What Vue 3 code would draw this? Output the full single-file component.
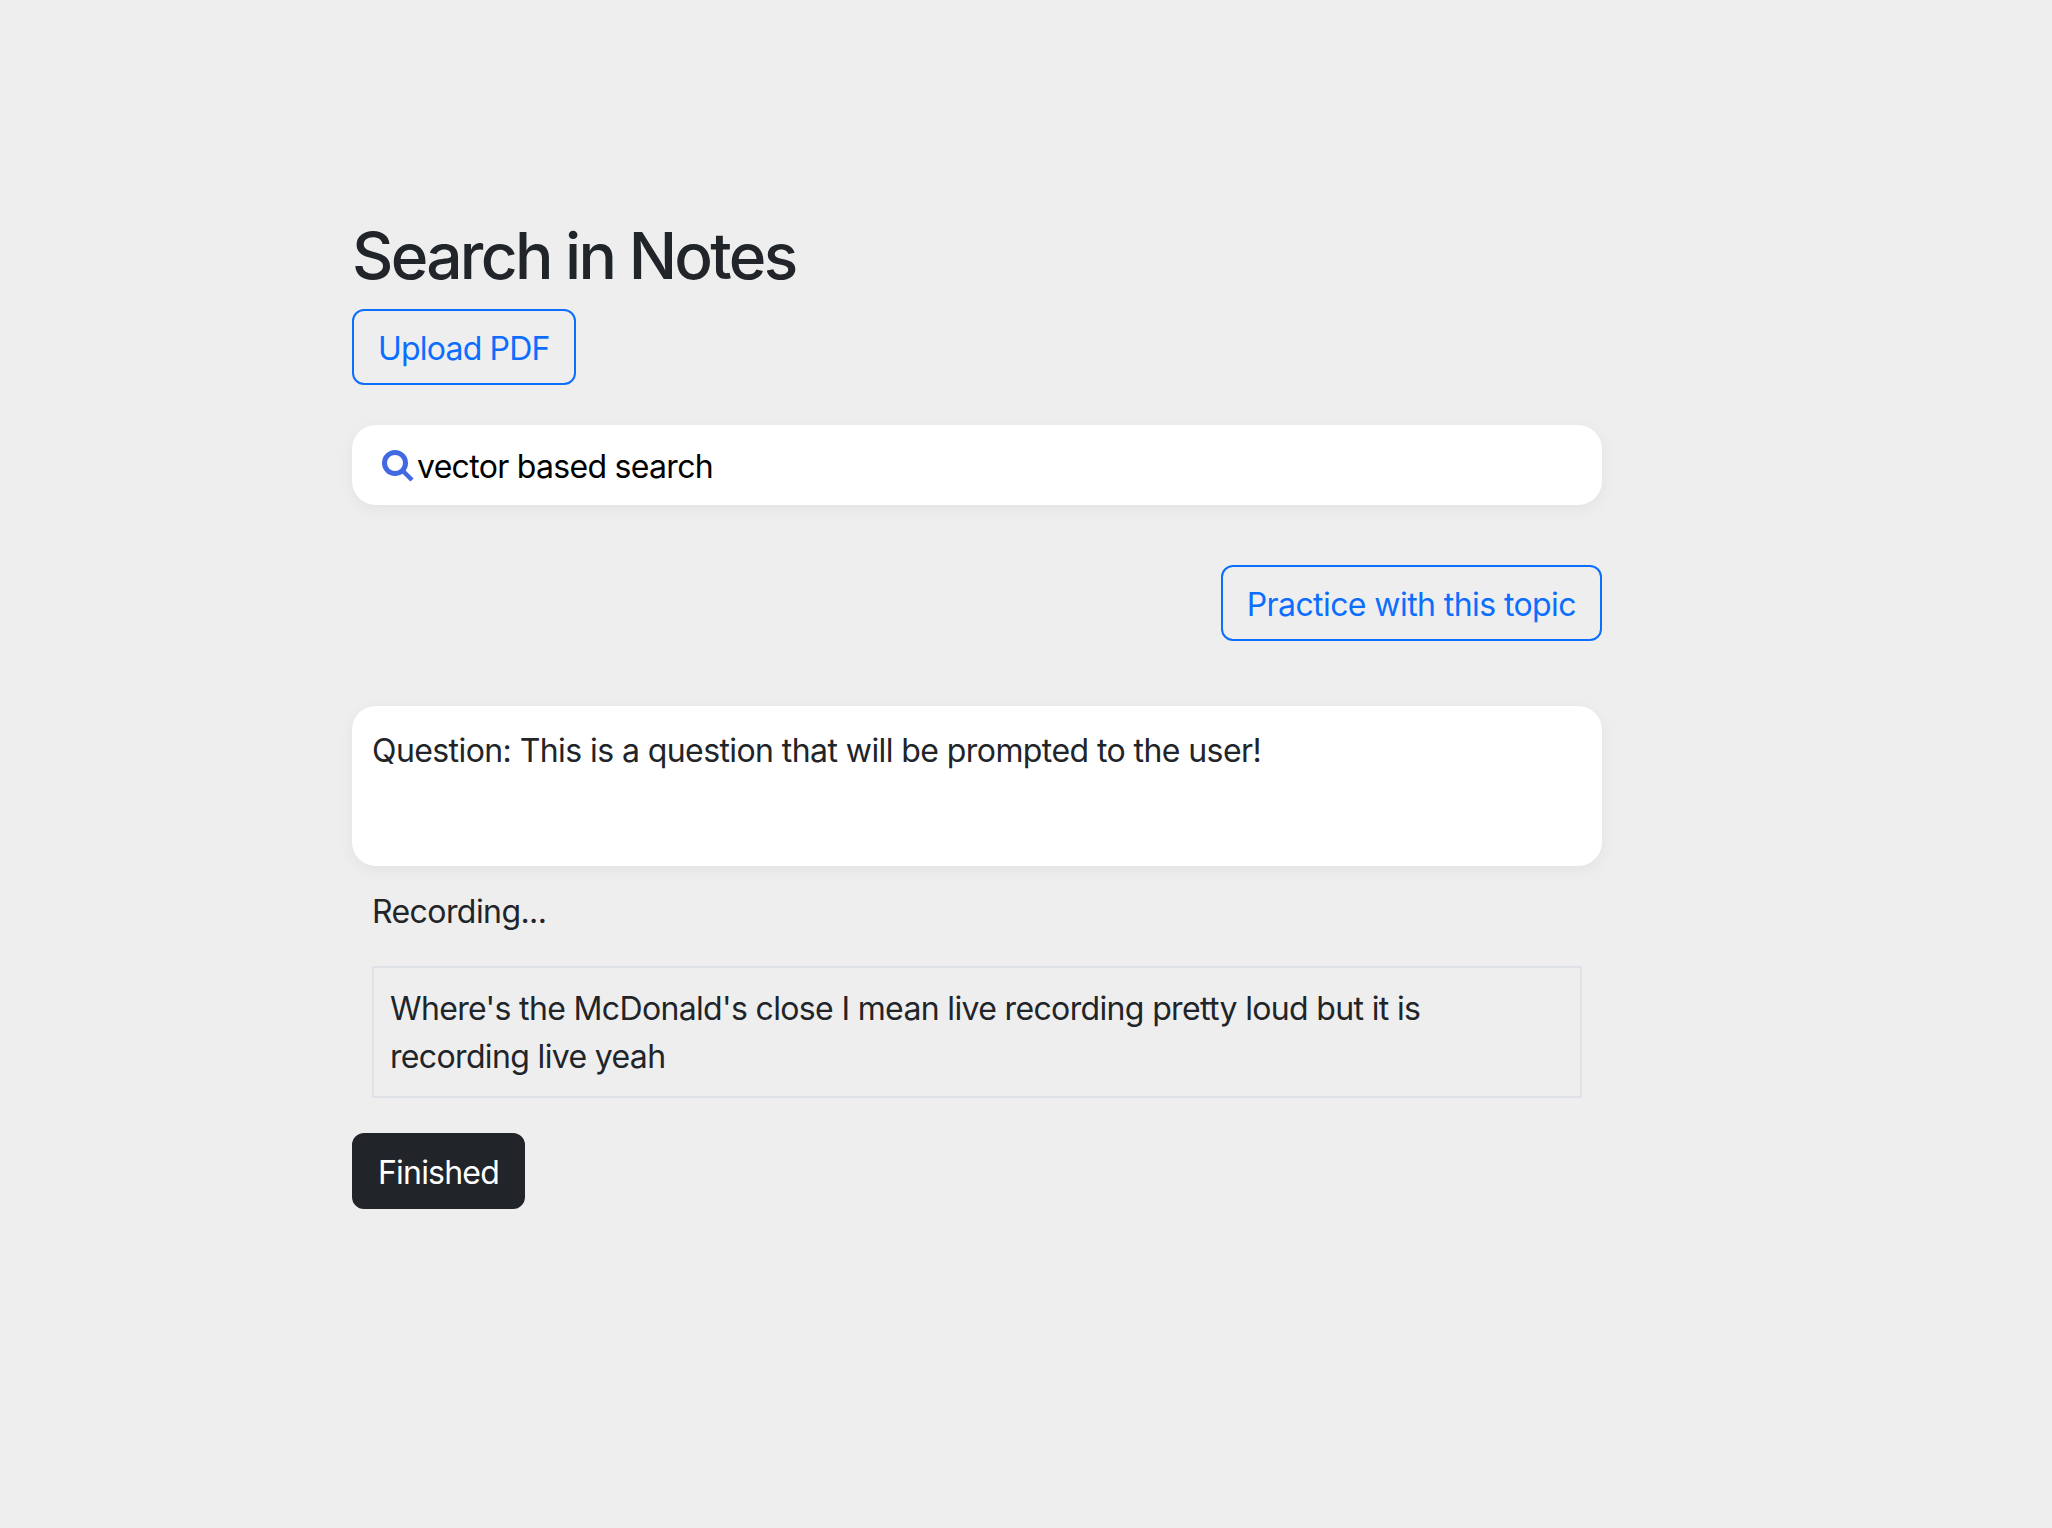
<template>
  <div class="page">
    <h2 class="title">Search in Notes</h2>
    <button class="btn btn_outline btn_short">Upload PDF</button>

    <div class="search_bar">
      <svg class="search_icon" viewBox="0 0 32 32" width="32" height="32">
        <circle cx="13" cy="13" r="10.5" fill="none" stroke="#4169e1" stroke-width="5" />
        <path d="M20.5 20.5L30 30" fill="none" stroke="#4169e1" stroke-width="4.5" />
      </svg>
      <span class="search_text">{{ query }}</span>
    </div>

    <div class="practice_row">
      <button class="btn btn_outline">Practice with this topic</button>
    </div>

    <div class="question_card">Question: {{ question }}</div>

    <div class="answer">
      <p class="status">Recording...</p>
      <div class="transcript">{{ transcript }}</div>
    </div>

    <button class="btn btn_dark btn_short">Finished</button>
  </div>
</template>

<script setup>
import { ref } from 'vue';

const query = ref('vector based search');
const question = ref('This is a question that will be prompted to the user!');
const transcript = ref("Where's the McDonald's close I mean live recording pretty loud but it is recording live yeah");
</script>

<style>
body {
  background: #eeeeee;
}
</style>

<style scoped>
.page {
  box-sizing: border-box;
  width: 1250px;
  min-height: 1528px;
  margin-left: 352px;
  padding-top: 217px;
  font-family: Inter, "Liberation Sans", sans-serif;
  font-size: 32px;
  line-height: 48px;
  letter-spacing: -0.58px;
  color: #212529;
}

.title {
  margin: 0 0 15px;
  font-size: 64px;
  font-weight: 500;
  line-height: 77px;
  letter-spacing: -2.7px;
}

.btn {
  display: block;
  box-sizing: border-box;
  height: 76px;
  padding: 3px 24px 0;
  border: 2px solid transparent;
  border-radius: 12px;
  font: inherit;
  letter-spacing: inherit;
  background: transparent;
}

.btn_short {
  letter-spacing: -0.8px;
}

.btn_outline {
  border-color: #0d6efd;
  color: #0d6efd;
}

.btn_dark {
  background: #212529;
  border-color: #212529;
  color: #fff;
}

.search_bar {
  display: flex;
  align-items: center;
  gap: 3px;
  height: 80px;
  margin-top: 40px;
  padding: 0 30px;
  border-radius: 24px;
  background: #fff;
  color: #000;
  box-shadow: 0 4px 16px rgba(0, 0, 0, 0.05);
}

.search_icon {
  flex: none;
  margin-top: 2px;
}

.search_text {
  margin-top: 3px;
  letter-spacing: -0.7px;
}

.practice_row {
  display: flex;
  justify-content: flex-end;
  margin-top: 60px;
}

.question_card {
  box-sizing: border-box;
  height: 160px;
  margin-top: 65px;
  padding: 21px 20px;
  border-radius: 24px;
  background: #fff;
  box-shadow: 0 4px 16px rgba(0, 0, 0, 0.05);
}

.answer {
  padding: 0 20px;
}

.status {
  margin: 22px 0 30px;
}

.transcript {
  box-sizing: border-box;
  padding: 17px 16px 15px;
  border: 2px solid #dee2e6;
  letter-spacing: -0.65px;
}

.btn_dark {
  margin-top: 35px;
}
</style>
